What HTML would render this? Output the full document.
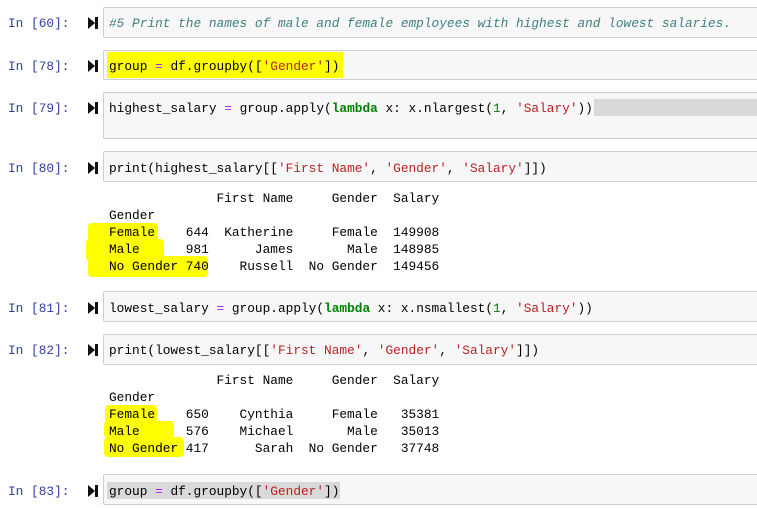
<!DOCTYPE html>
<html><head><style>
body{margin:0;width:757px;height:508px;background:#fff;position:relative;overflow:hidden;font-family:"Liberation Mono",monospace;font-size:12.8px;}
.p{position:absolute;left:8px;color:#303f9f;line-height:17px;margin-top:2px}
.r{position:absolute;left:88px;width:10px;height:12px;margin-top:2px}
.r:before{content:"";position:absolute;left:0;top:0;border-left:7px solid #111;border-top:6px solid transparent;border-bottom:6px solid transparent;}
.r:after{content:"";position:absolute;left:7px;top:0;width:3px;height:12px;background:#111;}
.c{position:absolute;left:103px;width:660px;background:#f7f7f7;border:1px solid #cfcfcf;border-radius:2px;box-sizing:border-box;}
.t,.o{position:absolute;left:109px;white-space:pre;line-height:17px;color:#000;margin-top:2px}
.hl{position:absolute;background:#ffff00;}
.k{color:#008000;font-weight:bold}.s{color:#ba2121}.e{color:#aa22ff}.n{color:#008000}
.cm{color:#408080;font-style:italic}
</style></head><body>
<div class="p" style="top:13px">In [60]:</div><div class="r" style="top:15px"></div>
<div class="c" style="top:7px;height:31px"></div>
<div class="t cm" style="top:13px">#5 Print the names of male and female employees with highest and lowest salaries.</div>

<div class="p" style="top:56px">In [78]:</div><div class="r" style="top:58px"></div>
<div class="c" style="top:50px;height:30px"></div>
<div class="hl" style="left:107px;top:52px;width:236px;height:26px"></div>
<div class="t" style="top:56px">group <span class="e">=</span> df.groupby([<span class="s">'Gender'</span>])</div>

<div class="p" style="top:98px">In [79]:</div><div class="r" style="top:100px"></div>
<div class="c" style="top:92px;height:47px"></div>
<div style="position:absolute;left:594px;top:99px;width:163px;height:17px;background:#d9d9d9"></div>
<div class="t" style="top:98px">highest_salary <span class="e">=</span> group.apply(<span class="k">lambda</span> x: x.nlargest(<span class="n">1</span>, <span class="s">'Salary'</span>))</div>

<div class="p" style="top:158px">In [80]:</div><div class="r" style="top:160px"></div>
<div class="c" style="top:151px;height:31px"></div>
<div class="t" style="top:158px">print(highest_salary[[<span class="s">'First Name'</span>, <span class="s">'Gender'</span>, <span class="s">'Salary'</span>]])</div>

<div class="hl" style="left:88px;top:223px;width:70px;height:20px;border-radius:4px"></div>
<div class="hl" style="left:86px;top:239px;width:78px;height:22px;border-radius:4px"></div>
<div class="hl" style="left:88px;top:256px;width:120px;height:21px;border-radius:4px"></div>
<div class="o" style="top:188px">              First Name     Gender  Salary
Gender
Female    644  Katherine     Female  149908
Male      981      James       Male  148985
No Gender 740    Russell  No Gender  149456</div>

<div class="p" style="top:298px">In [81]:</div><div class="r" style="top:300px"></div>
<div class="c" style="top:291px;height:31px"></div>
<div class="t" style="top:298px">lowest_salary <span class="e">=</span> group.apply(<span class="k">lambda</span> x: x.nsmallest(<span class="n">1</span>, <span class="s">'Salary'</span>))</div>

<div class="p" style="top:340px">In [82]:</div><div class="r" style="top:342px"></div>
<div class="c" style="top:334px;height:31px"></div>
<div class="t" style="top:340px">print(lowest_salary[[<span class="s">'First Name'</span>, <span class="s">'Gender'</span>, <span class="s">'Salary'</span>]])</div>

<div class="hl" style="left:105px;top:405px;width:52px;height:18px;border-radius:4px"></div>
<div class="hl" style="left:104px;top:421px;width:70px;height:17px;border-radius:4px"></div>
<div class="hl" style="left:104px;top:437px;width:80px;height:20px;border-radius:4px"></div>
<div class="o" style="top:370px">              First Name     Gender  Salary
Gender
Female    650    Cynthia     Female   35381
Male      576    Michael       Male   35013
No Gender 417      Sarah  No Gender   37748</div>

<div class="p" style="top:481px">In [83]:</div><div class="r" style="top:483px"></div>
<div class="c" style="top:474px;height:31px"></div>
<div style="position:absolute;left:107px;top:482px;width:233px;height:17px;background:#d9d9d9"></div>
<div class="t" style="top:481px">group <span class="e">=</span> df.groupby([<span class="s">'Gender'</span>])</div>
</body></html>
